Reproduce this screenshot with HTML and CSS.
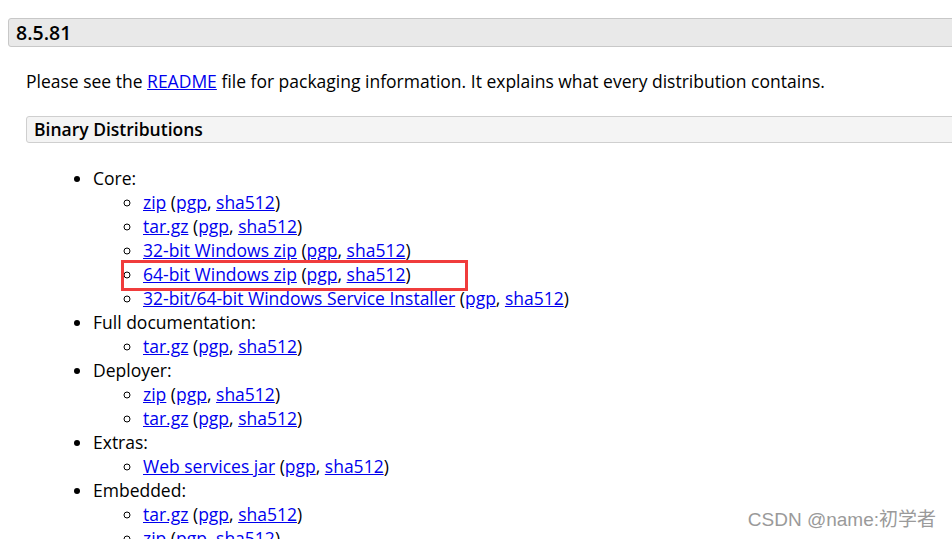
FILE: index.html
```html
<!DOCTYPE html>
<html>
<head>
<meta charset="utf-8">
<link rel="stylesheet" href="styles.css">
</head>
<body>
<div class="page">
  <h3 class="ver">8.5.81</h3>
  <div class="section">
    <p class="intro">Please see the <a href="#">README</a> file for packaging information. It explains what every distribution contains.</p>
    <h4 class="sub">Binary Distributions</h4>
    <ul class="list">
      <li>Core:
        <ul class="inner">
          <li><a href="#">zip</a> (<a href="#">pgp</a>, <a href="#">sha512</a>)</li>
          <li><a href="#">tar.gz</a> (<a href="#">pgp</a>, <a href="#">sha512</a>)</li>
          <li><a href="#">32-bit Windows zip</a> (<a href="#">pgp</a>, <a href="#">sha512</a>)</li>
          <li class="marked"><a href="#">64-bit Windows zip</a> (<a href="#">pgp</a>, <a href="#">sha512</a>)<span class="redbox"></span></li>
          <li><a href="#">32-bit/64-bit Windows Service Installer</a> (<a href="#">pgp</a>, <a href="#">sha512</a>)</li>
        </ul>
      </li>
      <li>Full documentation:
        <ul class="inner">
          <li><a href="#">tar.gz</a> (<a href="#">pgp</a>, <a href="#">sha512</a>)</li>
        </ul>
      </li>
      <li>Deployer:
        <ul class="inner">
          <li><a href="#">zip</a> (<a href="#">pgp</a>, <a href="#">sha512</a>)</li>
          <li><a href="#">tar.gz</a> (<a href="#">pgp</a>, <a href="#">sha512</a>)</li>
        </ul>
      </li>
      <li>Extras:
        <ul class="inner">
          <li><a href="#">Web services jar</a> (<a href="#">pgp</a>, <a href="#">sha512</a>)</li>
        </ul>
      </li>
      <li>Embedded:
        <ul class="inner">
          <li><a href="#">tar.gz</a> (<a href="#">pgp</a>, <a href="#">sha512</a>)</li>
          <li><a href="#">zip</a> (<a href="#">pgp</a>, <a href="#">sha512</a>)</li>
        </ul>
      </li>
    </ul>
  </div>
</div>
<div class="watermark">CSDN @name:初学者</div>
</body>
</html>
```

FILE: styles.css
```css
html, body {
  margin: 0;
  padding: 0;
  background: #fff;
  overflow: hidden;
  height: 539px;
}
body {
  font-family: "Open Sans", "Liberation Sans", sans-serif;
  color: #000;
  font-size: 17.5px;
  line-height: 24px;
  position: relative;
}
.page {
  padding-top: 18px;
}
a {
  color: #0000ee;
  text-decoration: underline;
}
.ver {
  margin: 0 -20px 0 8px;
  height: 29px;
  box-sizing: border-box;
  background: #e9e9e9;
  border: 1px solid #c8c8c8;
  border-radius: 3px;
  font-size: 19.5px;
  font-weight: 600;
  line-height: 27px;
  padding-left: 7px;
}
.section {
  padding-left: 26px;
}
.intro {
  margin: 22px 0 0;
  line-height: 24px;
}
.sub {
  margin: 23px -20px 0 0;
  height: 27px;
  box-sizing: border-box;
  background: #f4f4f4;
  border: 1px solid #cfcfcf;
  border-radius: 3px;
  font-size: 17.5px;
  font-weight: 600;
  line-height: 25px;
  padding-left: 7px;
}
.list {
  margin: 23px 0 0;
  padding-left: 67px;
}
.inner {
  margin: 0;
  padding-left: 50px;
  list-style-type: circle;
}
.marked {
  position: relative;
}
.redbox {
  position: absolute;
  left: -22px;
  top: -2px;
  width: 347px;
  height: 31px;
  box-sizing: border-box;
  border: 3px solid #f03c3c;
}
.watermark {
  position: absolute;
  right: 16px;
  top: 508px;
  font-family: "Liberation Sans", "Noto Sans CJK SC", sans-serif;
  font-size: 19px;
  line-height: 24px;
  color: #9a9a9a;
}
```
